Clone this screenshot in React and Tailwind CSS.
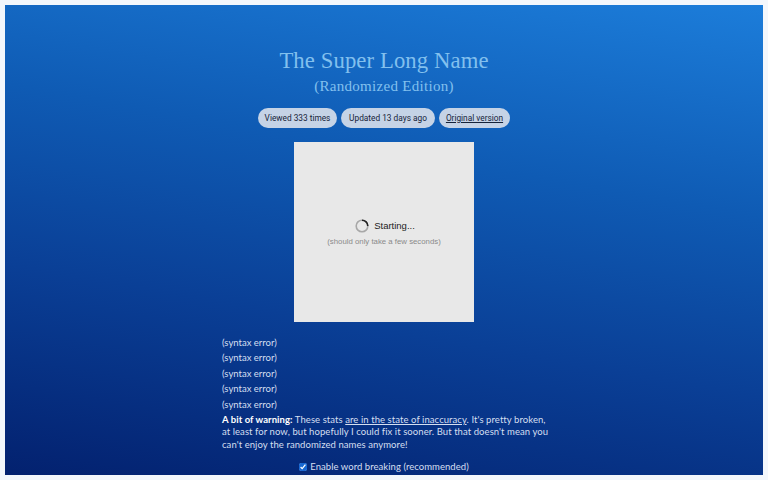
import React from 'react';

const errors = [1, 2, 3, 4, 5];

const pillClass = 'rounded-full bg-[#c5d3e6] h-[20px] flex items-center justify-center whitespace-nowrap text-[8.3px] text-[#15233a]';

export default function App() {
  return (
    <div className="h-[480px] overflow-hidden bg-[#f3f7fc] px-[5px] pt-[5px] font-['Lato',sans-serif]">
      <div className="h-[470px] overflow-hidden bg-[linear-gradient(190deg,#1c7dda_0%,#0f5bb4_35%,#0a3f96_65%,#03216f_100%)] flex flex-col items-center">
        <h1 className="mt-[42px] text-[22.7px] leading-[28px] font-normal tracking-[0.1px] text-[#82c0ee] font-['Liberation_Serif',serif]">
          The Super Long Name
        </h1>
        <h2 className="mt-[1px] text-[15px] leading-[20px] font-normal tracking-[0.3px] text-[#82c0ee] font-['Liberation_Serif',serif]">
          (Randomized Edition)
        </h2>

        <div className="mt-[12px] flex gap-[4px] font-['Roboto',sans-serif]">
          <span className={`${pillClass} w-[79px]`}>Viewed 333 times</span>
          <span className={`${pillClass} w-[94px]`}>Updated 13 days ago</span>
          <span className={`${pillClass} w-[71px]`}><a className="underline">Original version</a></span>
        </div>

        <div className="mt-[14px] w-[180px] h-[180px] shrink-0 bg-[#e8e8e8] flex flex-col items-center justify-center font-['Liberation_Sans',sans-serif]">
          <div className="mt-[3px] ml-[2px] flex items-center gap-[5px]">
            <svg width="14" height="14" viewBox="0 0 14 14" fill="none">
              <circle cx="7" cy="7" r="5.8" stroke="#a8a8a8" strokeWidth="1.6" />
              <path d="M7 1.2A5.8 5.8 0 0 1 12.8 7" stroke="#222" strokeWidth="1.6" />
            </svg>
            <span className="text-[9.5px] leading-[14px] text-[#222]">Starting...</span>
          </div>
          <p className="mt-[3px] text-[7.8px] leading-[12px] text-[#8a8a8a]">(should only take a few seconds)</p>
        </div>

        <div className="mt-[15px] w-[324px] text-[9.5px] text-[#d5dff0]">
          <div className="flex flex-col gap-[3.4px]">
            {errors.map((n) => (
              <p key={n} className="leading-[12px]">(syntax error)</p>
            ))}
          </div>
          <p className="mt-[3px] w-[332px] leading-[12.5px] tracking-[0.07px]">
            <b className="text-white">A bit of warning:</b> These stats{' '}
            <span className="underline">are in the state of inaccuracy</span>. It's pretty broken,
            at least for now, but hopefully I could fix it sooner. But that doesn't mean you
            can't enjoy the randomized names anymore!
          </p>
          <label className="mt-[9px] flex items-center justify-center gap-[3px]">
            <input type="checkbox" defaultChecked className="w-[8px] h-[8px] accent-[#1767d2]" />
            <span className="tracking-[0.05px]">Enable word breaking (recommended)</span>
          </label>
        </div>
      </div>
    </div>
  );
}
